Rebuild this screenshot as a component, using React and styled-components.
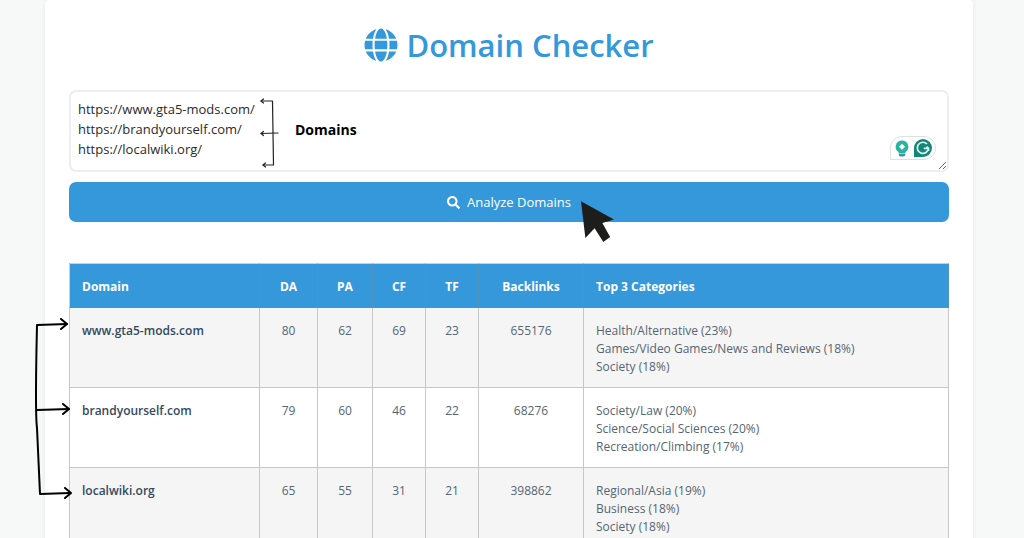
import styled, { createGlobalStyle } from 'styled-components';
import { FaGlobe, FaSearch } from 'react-icons/fa';

const rows = [
    {
        domain: "www.gta5-mods.com", da: 80, pa: 62, cf: 69, tf: 23, backlinks: 655176,
        categories: ["Health/Alternative (23%)", "Games/Video Games/News and Reviews (18%)", "Society (18%)"],
    },
    {
        domain: "brandyourself.com", da: 79, pa: 60, cf: 46, tf: 22, backlinks: 68276,
        categories: ["Society/Law (20%)", "Science/Social Sciences (20%)", "Recreation/Climbing (17%)"],
    },
    {
        domain: "localwiki.org", da: 65, pa: 55, cf: 31, tf: 21, backlinks: 398862,
        categories: ["Regional/Asia (19%)", "Business (18%)", "Society (18%)"],
    },
];

const domains = "https://www.gta5-mods.com/\nhttps://brandyourself.com/\nhttps://localwiki.org/";

function DomainNote() {
    return (
        <Note>
            <svg width="20" height="70" viewBox="0 0 20 70" fill="none" stroke="#222" strokeWidth="1.2" strokeLinecap="round" strokeLinejoin="round">
                <path d="M1 3H12.5L13.5 67H3M1 35.5L18 35" />
                <path d="M3.5 1L1 3L3.5 5M3.5 33.5L1 35.5L3.5 37.5M5.5 65L3 67L5.5 69" />
            </svg>
            <NoteText>Domains</NoteText>
        </Note>
    );
}

function WritingBadge() {
    return (
        <Badge>
            <svg width="14" height="17" viewBox="0 0 14 17" aria-hidden="true">
                <path d="M7 0.5a6.4 6.4 0 0 0-3.4 11.8V13h6.8v-.7A6.4 6.4 0 0 0 7 .5Z" fill="#2bb3a0" />
                <path d="M3.7 13.6h6.6v.8a2 2 0 0 1-2 2H5.7a2 2 0 0 1-2-2Z" fill="#4a8fa8" />
                <path d="M7 4.2L8.2 5.6L9.6 6.8L8.2 8L7 9.4L5.8 8L4.4 6.8L5.8 5.6Z" fill="#fff" stroke="#fff" strokeWidth="0.8" strokeLinejoin="round" />
            </svg>
            <svg width="18" height="18" viewBox="0 0 18 18" aria-hidden="true">
                <path d="M9 0a9 9 0 1 1 0 18H0V9a9 9 0 0 1 9-9Z" fill="#11877a" />
                <path d="M13 5A5.6 5.6 0 1 0 14.5 9.3H9.8M14.5 9.3L12.6 7.6M14.5 9.3V12" fill="none" stroke="#dff1ee" strokeWidth="1.7" />
            </svg>
        </Badge>
    );
}

function RowArrows() {
    return (
        <Arrows width="40" height="184" viewBox="0 0 40 184" aria-hidden="true">
            <path d="M32 6L2 7Q0 95 2 110L5 176L35 175M2 92L34 91" />
            <path d="M26 1L32 6L26 11M28 86L34 91L28 96M30 170L36 175L30 180" />
        </Arrows>
    );
}

function App() {
    return (
        <Page>
            <GlobalStyle />
            <Card>
                <Title><FaGlobe size={34} />Domain Checker</Title>
                <Form onSubmit={e => e.preventDefault()}>
                    <Field>
                        <DomainInput aria-label="Domains" rows={3} spellCheck={false} defaultValue={domains} />
                        <DomainNote />
                        <WritingBadge />
                    </Field>
                    <AnalyzeButton type="submit">
                        <FaSearch size={13} />
                        Analyze Domains
                        <Pointer width="33" height="42" viewBox="0 0 34 43" aria-hidden="true">
                            <path d="M0 0L34 19L22 22.5L30 37L23 42L14 28L4.5 38Z" />
                        </Pointer>
                    </AnalyzeButton>
                </Form>
                <Results>
                    <Table>
                        <thead>
                            <tr>
                                <HeadCell $width="190px">Domain</HeadCell>
                                <HeadCell $width="58px" $center>DA</HeadCell>
                                <HeadCell $width="55px" $center>PA</HeadCell>
                                <HeadCell $width="53px" $center>CF</HeadCell>
                                <HeadCell $width="53px" $center>TF</HeadCell>
                                <HeadCell $width="105px" $center>Backlinks</HeadCell>
                                <HeadCell>Top 3 Categories</HeadCell>
                            </tr>
                        </thead>
                        <tbody>
                            {rows.map(row => (
                                <Row key={row.domain}>
                                    <Cell $strong>{row.domain}</Cell>
                                    <Cell $center>{row.da}</Cell>
                                    <Cell $center>{row.pa}</Cell>
                                    <Cell $center>{row.cf}</Cell>
                                    <Cell $center>{row.tf}</Cell>
                                    <Cell $center>{row.backlinks}</Cell>
                                    <Cell>
                                        {row.categories.map(name => <Category key={name}>{name}</Category>)}
                                    </Cell>
                                </Row>
                            ))}
                        </tbody>
                    </Table>
                    <RowArrows />
                </Results>
            </Card>
        </Page>
    );
}

export default App;

const GlobalStyle = createGlobalStyle`
    * {
        box-sizing: border-box;
    }

    body {
        margin: 0;
        background-color: #f7f9f9;
        font-family: "Open Sans", "Noto Sans", sans-serif;
        color: #2c3e50;
    }
`

const Page = styled.main`
    padding: 0 51px 0 45px;
`

const Card = styled.section`
    display: flex;
    flex-direction: column;
    padding: 24px;
    background-color: #ffffff;
    border-radius: 4px 4px 0 0;
    box-shadow: 0 0 5px rgba(0, 0, 0, 0.08);
`

const Title = styled.h1`
    display: flex;
    align-items: center;
    justify-content: center;
    gap: 8px;
    margin: 0 0 24px;
    font-size: 31px;
    font-weight: 600;
    line-height: 42px;
    color: #3498db;
`

const Form = styled.form`
    display: flex;
    flex-direction: column;
    gap: 10px;
`

const Field = styled.div`
    position: relative;
    display: flex;
`

const DomainInput = styled.textarea`
    flex: 1;
    padding: 7px 7px 11px;
    border: 2px solid #eeeeee;
    border-radius: 7px;
    background-color: #ffffff;
    font-family: inherit;
    font-size: 13px;
    line-height: 20px;
    color: #2b2b2b;
    resize: vertical;
    outline: none;
    overflow: hidden;
`

const Note = styled.div`
    position: absolute;
    top: 8px;
    left: 191px;
    display: flex;
    align-items: center;
    gap: 15px;
    font-size: 14px;
    font-weight: 700;
    color: #000000;
    pointer-events: none;
`

const NoteText = styled.span`
    padding-bottom: 7px;
`

const Badge = styled.div`
    position: absolute;
    right: 13px;
    bottom: 12px;
    display: flex;
    align-items: center;
    gap: 5px;
    padding: 2px 3px 2px 4px;
    border: 1px solid #dcdfe4;
    border-radius: 12px 12px 12px 0;
    background-color: #ffffff;
`

const AnalyzeButton = styled.button`
    position: relative;
    display: flex;
    align-items: center;
    justify-content: center;
    gap: 7px;
    height: 40px;
    padding: 0;
    border: none;
    border-radius: 7px;
    background-color: #3498db;
    font-family: inherit;
    font-size: 13px;
    color: #ffffff;
    cursor: pointer;
`

const Pointer = styled.svg`
    position: absolute;
    top: 19px;
    left: calc(50% + 72px);
    fill: #1d1d1b;
`

const Results = styled.div`
    position: relative;
    margin-top: 41px;
`

const Table = styled.table`
    width: 100%;
    table-layout: fixed;
    border-collapse: collapse;
    font-size: 12px;
    line-height: 18px;
`

const HeadCell = styled.th`
    width: ${props => props.$width || "auto"};
    padding: 14px 12px 11px;
    border: 1px solid rgba(127, 140, 141, 0.4);
    background-color: #3498db;
    font-weight: 700;
    text-align: ${props => props.$center ? "center" : "left"};
    color: #ffffff;
`

const Row = styled.tr`
    &:nth-child(odd) {
        background-color: #f5f5f5;
    }
`

const Cell = styled.td`
    padding: 14px 12px 11px;
    border: 1px solid #c6c8c8;
    vertical-align: top;
    font-weight: ${props => props.$strong ? 600 : 400};
    text-align: ${props => props.$center ? "center" : "left"};
    color: ${props => props.$strong ? "#34495e" : "#566573"};
`

const Category = styled.div`
    white-space: nowrap;
`

const Arrows = styled.svg`
    position: absolute;
    top: 55px;
    left: -34px;
    fill: none;
    stroke: #000000;
    stroke-width: 2;
    stroke-linecap: round;
    stroke-linejoin: round;
    pointer-events: none;
`
